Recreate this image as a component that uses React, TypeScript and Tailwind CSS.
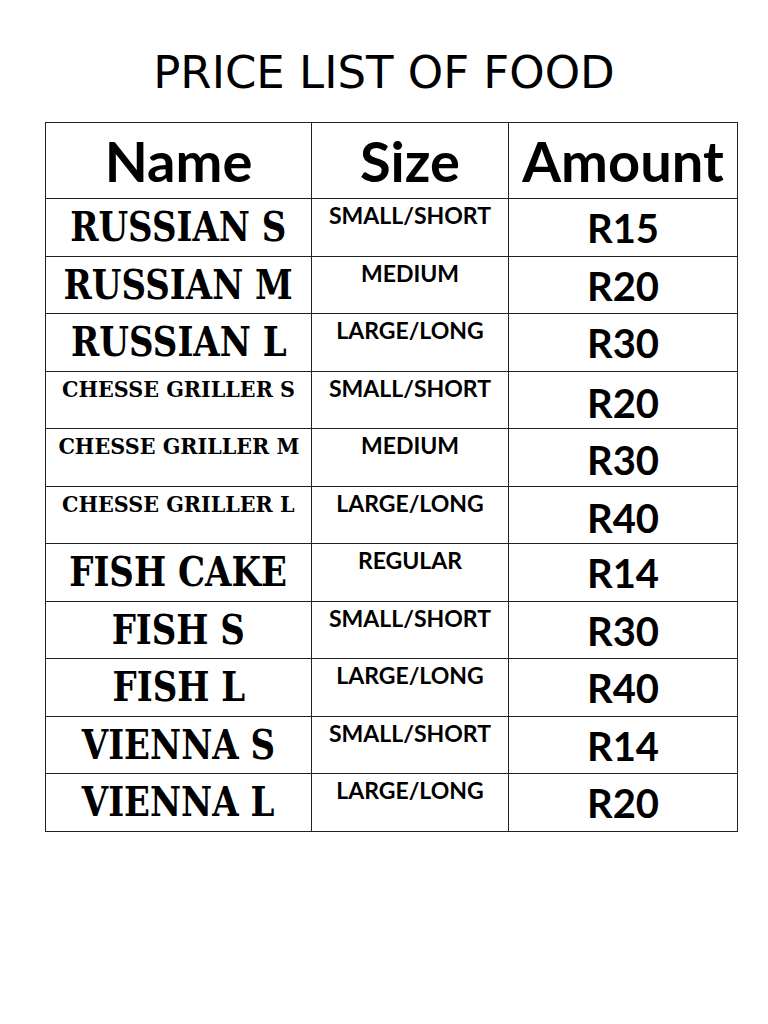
import React from "react";

type Row = { name: string; size: string; amount: string; small?: boolean };

const rows: Row[] = [
  { name: "RUSSIAN S", size: "SMALL/SHORT", amount: "R15" },
  { name: "RUSSIAN M", size: "MEDIUM", amount: "R20" },
  { name: "RUSSIAN L", size: "LARGE/LONG", amount: "R30" },
  { name: "CHESSE GRILLER S", size: "SMALL/SHORT", amount: "R20", small: true },
  { name: "CHESSE GRILLER M", size: "MEDIUM", amount: "R30", small: true },
  { name: "CHESSE GRILLER L", size: "LARGE/LONG", amount: "R40", small: true },
  { name: "FISH CAKE", size: "REGULAR", amount: "R14" },
  { name: "FISH S", size: "SMALL/SHORT", amount: "R30" },
  { name: "FISH L", size: "LARGE/LONG", amount: "R40" },
  { name: "VIENNA S", size: "SMALL/SHORT", amount: "R14" },
  { name: "VIENNA L", size: "LARGE/LONG", amount: "R20" },
];

// condensed look: DejaVu Serif bold squeezed horizontally
const serif = "font-['DejaVu_Serif',serif] font-bold shrink-0 whitespace-nowrap";
const lato = "font-['Lato',sans-serif] font-bold";

export default function App() {
  return (
    <div className="w-[768px] h-[1024px] bg-white text-black">
      <h1 className="pt-[46px] text-center font-['DejaVu_Sans',sans-serif] text-[45px] leading-[54px]">
        PRICE LIST OF FOOD
      </h1>
      <table className="mt-[22px] ml-[45px] w-[692px] border-collapse table-fixed">
        <colgroup>
          <col className="w-[266px]" />
          <col className="w-[197px]" />
          <col className="w-[229px]" />
        </colgroup>
        <thead>
          <tr className="h-[76px]">
            <th className={`border border-[#222] text-[56px] leading-none p-0 ${lato}`}>Name</th>
            <th className={`border border-[#222] text-[56px] leading-none p-0 ${lato}`}>Size</th>
            <th className={`border border-[#222] text-[56px] leading-none p-0 ${lato}`}>Amount</th>
          </tr>
        </thead>
        <tbody>
          {rows.map((r) => (
            <tr key={r.name} className="h-[57.5px]">
              <td className="border border-[#222] align-top p-0">
                {r.small ? (
                  <div className="flex justify-center pt-[3px]">
                    <span className={`${serif} [transform:scaleX(0.9)] text-[23px] leading-[28px]`}>{r.name}</span>
                  </div>
                ) : (
                  <div className="flex justify-center pt-[4px]">
                    <span className={`${serif} [transform:scaleX(0.83)] text-[41px] leading-[48px]`}>{r.name}</span>
                  </div>
                )}
              </td>
              <td className="border border-[#222] align-top text-center p-0">
                <div className={`${lato} text-[23px] leading-[28px] pt-[2px]`}>{r.size}</div>
              </td>
              <td className="border border-[#222] align-top text-center p-0">
                <div className={`${lato} text-[40px] leading-[46px] ${r.small ? "pt-[8px]" : "pt-[6px]"}`}>
                  {r.amount}
                </div>
              </td>
            </tr>
          ))}
        </tbody>
      </table>
    </div>
  );
}
